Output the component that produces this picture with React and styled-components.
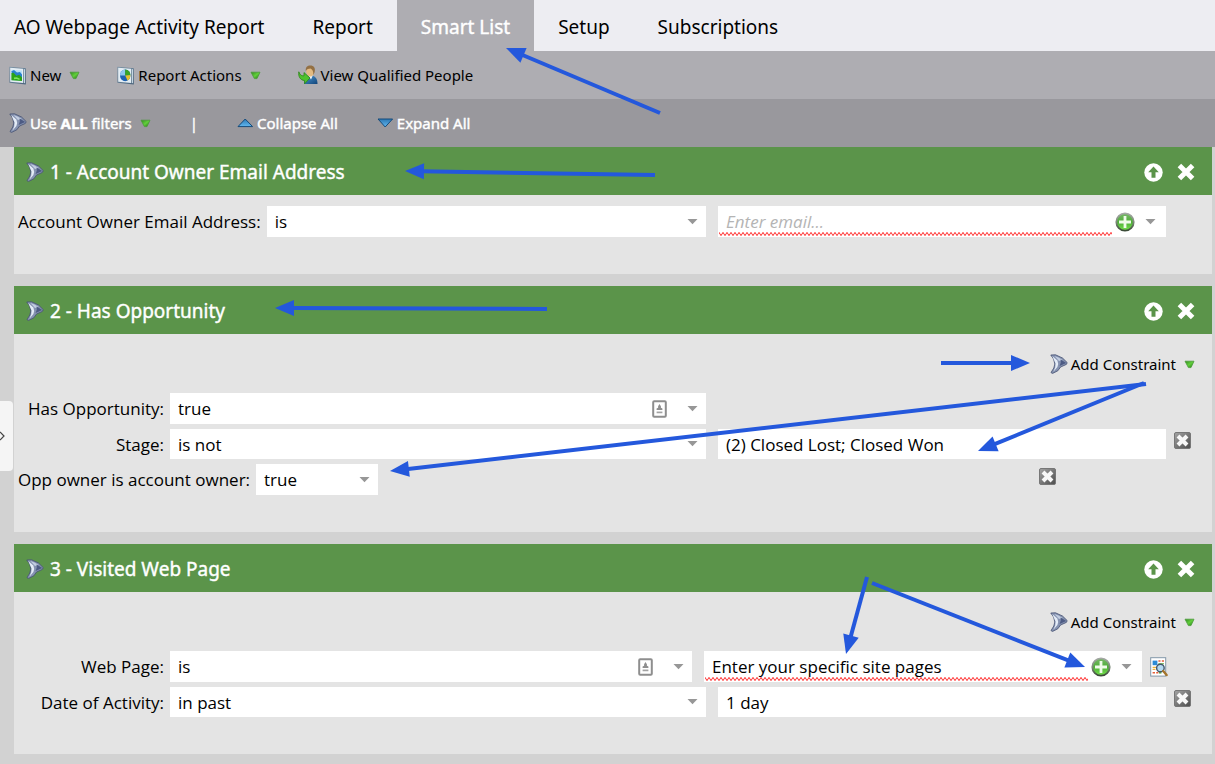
import React from "react";
import styled, { createGlobalStyle, css } from "styled-components";

const GlobalStyle = createGlobalStyle`
  *, *::before, *::after { box-sizing: border-box; }
  body {
    margin: 0;
    background: #d2d2d2;
    color: #000;
    font-family: "Open Sans", "Noto Sans", sans-serif;
    font-size: 17px;
  }
  button, input, select {
    margin: 0;
    padding: 0;
    border: 0;
    background: none;
    color: inherit;
    font: inherit;
  }
  button { cursor: pointer; }
`;

const headingFont = `"Noto Sans", "Open Sans", sans-serif`;

const Page = styled.div`
  position: relative;
  min-height: 100vh;
  overflow: hidden;
`;

/* ---------- Top navigation ---------- */

const TabBar = styled.nav`
  display: flex;
  height: 51px;
  background: #ededf2;
  font-family: ${headingFont};
  font-size: 19px;
  line-height: 28px;
`;

const TabLink = styled.a`
  display: flex;
  align-items: center;
  padding: 3px 24px 0;
  color: ${(p) => (p.$active ? "#fff" : "#000")};
  background: ${(p) => (p.$active ? "#aeadb2" : "transparent")};
  -webkit-text-stroke: ${(p) => (p.$active ? "0.4px #fff" : "0")};
  text-decoration: none;
  white-space: nowrap;
  &:first-child { padding-left: 14px; }
`;

/* ---------- Tool bars ---------- */

const Toolbar = styled.div`
  display: flex;
  align-items: center;
  gap: ${(p) => (p.$dark ? "39px" : "37px")};
  height: 48px;
  padding: 0 9px;
  font-size: 15px;
  background: ${(p) => (p.$dark ? "#99989d" : "#aeadb2")};
  color: ${(p) => (p.$dark ? "#fff" : "#000")};
  -webkit-text-stroke: ${(p) => (p.$dark ? "0.4px #fff" : "0")};
`;

const ToolButton = styled.button`
  display: flex;
  align-items: center;
  gap: 3px;
  font-family: ${headingFont};
  font-size: 15px;
  line-height: 20px;
  white-space: nowrap;
  svg { flex: none; }
`;

const ToolText = styled.span`
  margin-right: ${(p) => (p.$menu ? "5px" : "0")};
`;

/* ---------- Filter cards ---------- */

const Canvas = styled.main`
  position: relative;
  display: flex;
  flex-direction: column;
  gap: 12px;
  padding: 0 3px 9px 14px;
`;

const Card = styled.section`
  background: #e4e4e4;
`;

const CardHeader = styled.header`
  display: flex;
  align-items: center;
  gap: 14px;
  height: 48px;
  padding: 2px 17px 0 12px;
  background: #5b944a;
  color: #fff;
`;

const CardTitle = styled.h2`
  display: flex;
  flex: 1;
  align-items: center;
  gap: 6px;
  margin: 0;
  font-family: ${headingFont};
  font-size: 19px;
  font-weight: 400;
  line-height: 28px;
  -webkit-text-stroke: 0.4px #fff;
`;

const IconButton = styled.button`
  display: flex;
  flex: none;
  svg { display: block; }
`;

const CardBody = styled.div`
  display: flex;
  flex-direction: column;
  gap: 5px;
  padding: 11px 0 37px 4px;
`;

const ConstraintBar = styled.div`
  display: flex;
  align-items: center;
  justify-content: flex-end;
  height: 38px;
  margin-bottom: 5px;
  padding-right: 17px;
`;

const Row = styled.div`
  display: flex;
  height: ${(p) => (p.$compact ? "30px" : "31px")};
`;

const Operator = styled.div`
  display: flex;
  flex: ${(p) => (p.$narrow ? "674" : "688")} 1 0;
  min-width: 0;
  gap: 6px;
  margin-right: 12px;
`;

const ShortOperator = styled.div`
  display: flex;
  flex: none;
  gap: 6px;
`;

const Label = styled.label`
  display: flex;
  flex: none;
  align-items: center;
  justify-content: flex-end;
  min-width: 146px;
  white-space: nowrap;
`;

const field = css`
  position: relative;
  display: flex;
  align-items: center;
  min-width: 0;
  background: #fff;
`;

const SelectBox = styled.div`
  ${field}
  flex: ${(p) => (p.$short ? "0 0 122px" : "1")};
`;

const Select = styled.select`
  appearance: none;
  width: 100%;
  height: 100%;
  padding: 0 28px 0 8px;
`;

const SelectMarks = styled.span`
  position: absolute;
  top: 0;
  right: 8px;
  bottom: 0;
  display: flex;
  align-items: center;
  gap: 20px;
  pointer-events: none;
`;

const ValueBox = styled.div`
  ${field}
  flex: ${(p) => (p.$narrow ? "438" : "448")} 1 0;
`;

const EmptyValue = styled.div`
  flex: 448 1 0;
`;

const InputWrap = styled.div`
  position: relative;
  flex: 1;
  height: 100%;
  min-width: 0;
`;

const Input = styled.input`
  width: 100%;
  height: 100%;
  padding: 0 8px;
  outline: 0;
  &::placeholder { color: #b4b4b4; font-style: italic; opacity: 1; }
`;

const WaveLine = styled.svg`
  position: absolute;
  left: 1px;
  bottom: 1px;
  width: calc(100% - 1px);
  height: 4px;
`;

const ValueTools = styled.div`
  display: flex;
  flex: none;
  align-items: center;
  gap: 10px;
  padding: 0 10px 0 3px;
`;

const RowActions = styled.div`
  display: flex;
  flex: none;
  align-items: ${(p) => (p.$narrow ? "center" : "flex-start")};
  width: ${(p) => (p.$narrow ? "70px" : "46px")};
  padding: ${(p) => (p.$narrow ? "0" : "3px")} 0 0 8px;
`;

const FarAction = styled.div`
  display: flex;
  flex: 1;
  align-items: flex-start;
  justify-content: flex-end;
  padding: 4px 156px 0 0;
`;

const SideTab = styled.button`
  position: absolute;
  top: 254px;
  left: 0;
  display: flex;
  align-items: center;
  width: 13px;
  height: 70px;
  border-radius: 0 4px 4px 0;
  background: #f5f5f5;
`;

const Annotations = styled.svg`
  position: absolute;
  top: 0;
  left: 0;
  overflow: visible;
  pointer-events: none;
`;

/* ---------- Icons ---------- */

const GradientSheet = styled.svg`
  position: absolute;
`;

const Defs = () => (
  <GradientSheet width="0" height="0" aria-hidden="true">
    <defs>
      <linearGradient id="greenTri" x1="0" y1="0" x2="1" y2="1">
        <stop offset="0" stopColor="#2f8a1c" />
        <stop offset="0.5" stopColor="#62cf3c" />
        <stop offset="1" stopColor="#1e7410" />
      </linearGradient>
      <linearGradient id="blueTri" x1="0" y1="0" x2="0" y2="1">
        <stop offset="0" stopColor="#2c78b4" />
        <stop offset="1" stopColor="#62b8f0" />
      </linearGradient>
      <linearGradient id="plusRing" x1="0" y1="0" x2="0" y2="1">
        <stop offset="0" stopColor="#a5a8a5" />
        <stop offset="0.5" stopColor="#7c8a79" />
        <stop offset="1" stopColor="#3a4a36" />
      </linearGradient>
      <linearGradient id="plusFill" x1="0" y1="0" x2="0" y2="1">
        <stop offset="0" stopColor="#79b86a" />
        <stop offset="0.5" stopColor="#4fae38" />
        <stop offset="1" stopColor="#74e24c" />
      </linearGradient>
      <linearGradient id="greyBox" x1="0" y1="0" x2="1" y2="1">
        <stop offset="0" stopColor="#a5a5a5" />
        <stop offset="1" stopColor="#4c4c4c" />
      </linearGradient>
      <linearGradient id="shirt" x1="0" y1="0" x2="1" y2="1">
        <stop offset="0" stopColor="#4d9ad8" />
        <stop offset="1" stopColor="#124478" />
      </linearGradient>
      <linearGradient id="page" x1="0" y1="0" x2="1" y2="1">
        <stop offset="0" stopColor="#7b93a6" />
        <stop offset="1" stopColor="#48637b" />
      </linearGradient>
      <pattern id="wave" width="4" height="4" patternUnits="userSpaceOnUse">
        <path d="M-2 4 L0 0.4 L2 3.6 L4 0.4 L6 4" fill="none" stroke="#f11" strokeWidth="0.9" />
      </pattern>
    </defs>
  </GradientSheet>
);

const FunnelIcon = () => (
  <svg width="18" height="20" viewBox="0 0 18 20" aria-hidden="true">
    <path d="M0.8 1 L5.5 0.8 L12.5 4 L17.2 8.6 L16.4 10.4 L10.6 13 L7.8 16.8 L2.6 19.4 L1 18.6 L3.8 14 L4.8 10 L3.6 5Z" fill="#8592b0" stroke="#465272" strokeWidth="0.8" strokeLinejoin="round" />
    <path d="M2.2 2 L7.4 6.6 L8.2 10 L7.4 13 L3.4 17.8 L5.2 13.6 L5.6 9.4Z" fill="#e4ecf7" />
    <path d="M4.4 2 L8.6 3.4 L12.6 6 L9 7Z" fill="#c2cde1" />
    <path d="M10.6 5.4 L16.2 9 L9.6 12 L10.8 8.6Z" fill="#4d5b84" />
  </svg>
);

const GreenTriangle = () => (
  <svg width="11" height="9" viewBox="0 0 11 9" aria-hidden="true">
    <path d="M1 1.2 H10 L7 7.6 H4.4Z" fill="url(#greenTri)" stroke="#4b9a3b" strokeWidth="0.8" strokeLinejoin="round" />
  </svg>
);

const BlueTriangle = ({ up }) => (
  <svg width="17" height="10" viewBox="0 0 17 10" aria-hidden="true">
    <path
      d={up ? "M8.2 1 L15.6 8.6 H1Z" : "M1 1 H15.6 L8.2 9Z"}
      fill="url(#blueTri)"
      stroke="#154a7a"
      strokeWidth="1"
      strokeLinejoin="round"
    />
  </svg>
);

const FramedPage = ({ children }) => (
  <svg width="18" height="19" viewBox="0 0 18 19" aria-hidden="true">
    <path d="M0.4 0.8 L16.8 2.2 V18.4 L0.4 16.8Z" fill="url(#page)" />
    <path d="M1.2 1.8 L14.2 2.8 V17 L1.2 15.8Z" fill="#e3edf4" />
    <path d="M14.9 3 L16 3.2 V17.2 L14.9 17Z" fill="#c4d6e2" />
    {children}
  </svg>
);

const NewIcon = () => (
  <FramedPage>
    <path d="M2.4 3.8 L13 4.6 V15 L2.4 14.2Z" fill="#b8e0f6" />
    <path d="M2.4 5.2 L5 4 L8 6.4 L11 6 L13 8.4 V12 H4Z" fill="#2a80cc" />
    <path d="M2.4 7 L4.6 6.8 L7.4 9.8 L10.2 8.8 L13 11.6 V15 L2.4 14.2Z" fill="#2ba318" />
    <path d="M5 12.4 L7.6 12 L10.6 13.4" fill="none" stroke="#7be65a" strokeWidth="1.6" />
  </FramedPage>
);

const ReportIcon = () => (
  <FramedPage>
    <ellipse cx="8.2" cy="9.4" rx="5.2" ry="5.8" fill="#1e62b2" />
    <path d="M8.2 9.4 V3.6 C5 3.8 3 6.2 3 9.4Z" fill="#8fc9ee" />
    <path d="M8.2 9.4 V3.6 C11.2 3.8 13.4 6.4 13.4 9Z" fill="#37a526" />
    <path d="M8.2 9.4 L13.4 9 C13.4 11.8 12.4 13.7 10.5 14.6Z" fill="#e6c22e" />
  </FramedPage>
);

const PeopleIcon = () => (
  <svg width="20" height="20" viewBox="0 0 20 20" aria-hidden="true">
    <path d="M6 19 C6.4 13 9 10.6 12.5 10.6 C17 10.6 19.5 13.5 19.5 19Z" fill="url(#shirt)" />
    <path d="M10.4 10.6 L13 14.4 L14.8 10.6Z" fill="#eef4fa" />
    <ellipse cx="12.2" cy="6.4" rx="4" ry="5.2" fill="#e3bb83" />
    <path d="M7.8 6 C7.4 2.2 9.4 .6 12.2 .6 C16 .6 17.6 3 16.6 7.2 L15.2 10 C15.6 6.2 14.5 4.4 12.5 3.4 C10.5 3.4 9 4 7.8 6Z" fill="#937044" />
    <path d="M.8 6.8 C2.2 10.4 4 11 6 10.8 V7.6 L12 13 L6.6 18.8 V15.6 C2.2 15.2 .2 11.6 .8 6.8Z" fill="#4fc22e" stroke="#2b8516" strokeWidth="0.8" strokeLinejoin="round" />
  </svg>
);

const UpCircleIcon = () => (
  <svg width="19" height="19" viewBox="0 0 19 19" aria-hidden="true">
    <circle cx="9.5" cy="9.5" r="9.2" fill="#fff" />
    <path d="M9.5 3.4 L14.8 9.2 H11.5 V14.8 H7.5 V9.2 H4.2Z" fill="#5b944a" />
  </svg>
);

const CrossIcon = () => (
  <svg width="18" height="18" viewBox="0 0 18 18" aria-hidden="true">
    <path d="M2.4 2.4 L15.6 15.6 M15.6 2.4 L2.4 15.6" stroke="#fff" strokeWidth="5" />
  </svg>
);

const RemoveIcon = () => (
  <svg width="17" height="17" viewBox="0 0 17 17" aria-hidden="true">
    <rect x="0.5" y="0.5" width="16" height="16" rx="1.5" fill="url(#greyBox)" stroke="#777" />
    <path d="M4 4 L13 13 M13 4 L4 13" stroke="#f8f8f8" strokeWidth="4" />
  </svg>
);

const PlusIcon = () => (
  <svg width="20" height="20" viewBox="0 0 20 20" aria-hidden="true">
    <circle cx="10" cy="10" r="8.7" fill="url(#plusFill)" stroke="url(#plusRing)" strokeWidth="1.8" />
    <path d="M10 4 V16 M4 10 H16" stroke="#effbea" strokeWidth="2.8" />
  </svg>
);

const Caret = () => (
  <svg width="11" height="8" viewBox="0 0 11 8" aria-hidden="true">
    <path d="M0.5 1 H10.5 L5.5 6.2Z" fill="#979797" />
  </svg>
);

const TokenIcon = () => (
  <svg width="15" height="18" viewBox="0 0 15 18" aria-hidden="true">
    <rect x="1.2" y="1.2" width="12.6" height="15.6" rx="1" fill="#fff" stroke="#8e8e8e" strokeWidth="2" />
    <path d="M7.5 4 L8.9 6.2 V7.8 L10.4 8.6 V10 H4.6 V8.6 L6.1 7.8 V6.2Z" fill="#8e8e8e" />
    <path d="M4.6 12.4 H10.4" stroke="#a2a2a2" strokeWidth="1.7" />
  </svg>
);

const BrowseIcon = () => (
  <svg width="18" height="20" viewBox="0 0 18 20" aria-hidden="true">
    <rect x="0.7" y="0.7" width="15" height="18.4" fill="#fff" stroke="#8297a8" />
    <path d="M2.6 3.6 H7.4 V8.2 H2.6Z" fill="#2b8ad6" />
    <path d="M8.4 4 H10.5 M11.8 4 H14" stroke="#e5613c" strokeWidth="1.4" />
    <path d="M8.4 6.6 H14" stroke="#8cc96a" strokeWidth="1.2" />
    <path d="M2.6 10.3 H6 M2.6 12.4 H5.4" stroke="#edb23d" strokeWidth="1.2" />
    <path d="M2.6 15.8 H5 M6.2 15.8 H8.4" stroke="#e5613c" strokeWidth="1.6" />
    <path d="M9 15.8 H11.4" stroke="#5fb544" strokeWidth="1.6" />
    <circle cx="10.4" cy="11" r="3.8" fill="#b4d9f2" stroke="#45586b" strokeWidth="1.4" />
    <path d="M13.2 14 L16.6 18" stroke="#a5752d" strokeWidth="2.4" strokeLinecap="round" />
  </svg>
);

const Chevron = () => (
  <svg width="6" height="10" viewBox="0 0 6 10" aria-hidden="true">
    <path d="M0 1 L4 5 L0 9" fill="none" stroke="#444" strokeWidth="1.2" />
  </svg>
);

/* ---------- Composed parts ---------- */

const Tool = ({ icon, menu, children }) => (
  <ToolButton type="button">
    {icon}
    <ToolText $menu={menu}>{children}</ToolText>
    {menu && <GreenTriangle />}
  </ToolButton>
);

const FilterCard = ({ title, constraints, children }) => (
  <Card>
    <CardHeader>
      <CardTitle>
        <FunnelIcon />
        {title}
      </CardTitle>
      <IconButton type="button" aria-label="Move up"><UpCircleIcon /></IconButton>
      <IconButton type="button" aria-label="Remove filter"><CrossIcon /></IconButton>
    </CardHeader>
    <CardBody>
      {constraints && (
        <ConstraintBar>
          <Tool icon={<FunnelIcon />} menu>Add Constraint</Tool>
        </ConstraintBar>
      )}
      {children}
    </CardBody>
  </Card>
);

const SelectField = ({ id, value, token, short }) => (
  <SelectBox $short={short}>
    <Select id={id} defaultValue={value}>
      <option>{value}</option>
    </Select>
    <SelectMarks>
      {token && <TokenIcon />}
      <Caret />
    </SelectMarks>
  </SelectBox>
);

const TokenInput = ({ narrow, label, ...input }) => (
  <ValueBox $narrow={narrow}>
    <InputWrap>
      <Input type="text" aria-label={label} spellCheck={false} {...input} />
      <WaveLine aria-hidden="true">
        <rect width="100%" height="4" fill="url(#wave)" />
      </WaveLine>
    </InputWrap>
    <ValueTools>
      <IconButton type="button" aria-label="Add value"><PlusIcon /></IconButton>
      <IconButton type="button" aria-label="Show values"><Caret /></IconButton>
    </ValueTools>
  </ValueBox>
);

const RemoveButton = () => (
  <IconButton type="button" aria-label="Remove constraint"><RemoveIcon /></IconButton>
);

/* Each arrow runs from its tail (x1, y1) to its tip (x2, y2). */
const ARROWS = [
  [660, 113, 506, 48],
  [655, 175, 405, 171],
  [547, 309, 275, 308],
  [941, 363, 1030, 363],
  [1146, 384, 390, 471],
  [1144, 383, 978, 451],
  [867, 577, 846, 654],
  [872, 583, 1085, 667],
];

const Arrow = ({ points: [x1, y1, x2, y2] }) => {
  const angle = (Math.atan2(y2 - y1, x2 - x1) * 180) / Math.PI;
  const length = Math.hypot(x2 - x1, y2 - y1);
  return (
    <g transform={`translate(${x1} ${y1}) rotate(${angle})`}>
      <path d={`M0 0 H${length - 16}`} stroke="#2458dc" strokeWidth="4" />
      <path d={`M${length} 0 l-19 -8 v16Z`} fill="#2458dc" />
    </g>
  );
};

const TABS = ["AO Webpage Activity Report", "Report", "Smart List", "Setup", "Subscriptions"];

export default function App() {
  return (
    <Page>
      <GlobalStyle />
      <Defs />
      <TabBar>
        {TABS.map((tab) => (
          <TabLink key={tab} href="#" $active={tab === "Smart List"}>{tab}</TabLink>
        ))}
      </TabBar>
      <Toolbar>
        <Tool icon={<NewIcon />} menu>New</Tool>
        <Tool icon={<ReportIcon />} menu>Report Actions</Tool>
        <Tool icon={<PeopleIcon />}>View Qualified People</Tool>
      </Toolbar>
      <Toolbar $dark>
        <Tool icon={<FunnelIcon />} menu>Use <b>ALL</b> filters</Tool>
        <span>|</span>
        <Tool icon={<BlueTriangle up />}>Collapse All</Tool>
        <Tool icon={<BlueTriangle />}>Expand All</Tool>
      </Toolbar>

      <Canvas>
        <FilterCard title="1 - Account Owner Email Address">
          <Row>
            <Operator>
              <Label htmlFor="email-op">Account Owner Email Address:</Label>
              <SelectField id="email-op" value="is" />
            </Operator>
            <TokenInput label="Email" placeholder="Enter email..." />
            <RowActions />
          </Row>
        </FilterCard>

        <FilterCard title="2 - Has Opportunity" constraints>
          <Row>
            <Operator>
              <Label htmlFor="has-opp">Has Opportunity:</Label>
              <SelectField id="has-opp" value="true" token />
            </Operator>
            <EmptyValue />
            <RowActions />
          </Row>
          <Row $compact>
            <Operator>
              <Label htmlFor="stage-op">Stage:</Label>
              <SelectField id="stage-op" value="is not" />
            </Operator>
            <ValueBox>
              <Input type="text" aria-label="Stage values" defaultValue="(2) Closed Lost; Closed Won" />
            </ValueBox>
            <RowActions><RemoveButton /></RowActions>
          </Row>
          <Row>
            <ShortOperator>
              <Label htmlFor="opp-owner">Opp owner is account owner:</Label>
              <SelectField id="opp-owner" value="true" short />
            </ShortOperator>
            <FarAction><RemoveButton /></FarAction>
          </Row>
        </FilterCard>

        <FilterCard title="3 - Visited Web Page" constraints>
          <Row>
            <Operator $narrow>
              <Label htmlFor="page-op">Web Page:</Label>
              <SelectField id="page-op" value="is" token />
            </Operator>
            <TokenInput narrow label="Web page" defaultValue="Enter your specific site pages" />
            <RowActions $narrow>
              <IconButton type="button" aria-label="Browse pages"><BrowseIcon /></IconButton>
            </RowActions>
          </Row>
          <Row $compact>
            <Operator>
              <Label htmlFor="date-op">Date of Activity:</Label>
              <SelectField id="date-op" value="in past" />
            </Operator>
            <ValueBox>
              <Input type="text" aria-label="Date range" defaultValue="1 day" />
            </ValueBox>
            <RowActions><RemoveButton /></RowActions>
          </Row>
        </FilterCard>

        <SideTab type="button" aria-label="Open side panel"><Chevron /></SideTab>
      </Canvas>

      <Annotations width="1" height="1" aria-hidden="true">
        {ARROWS.map((points) => <Arrow key={points.join()} points={points} />)}
      </Annotations>
    </Page>
  );
}
